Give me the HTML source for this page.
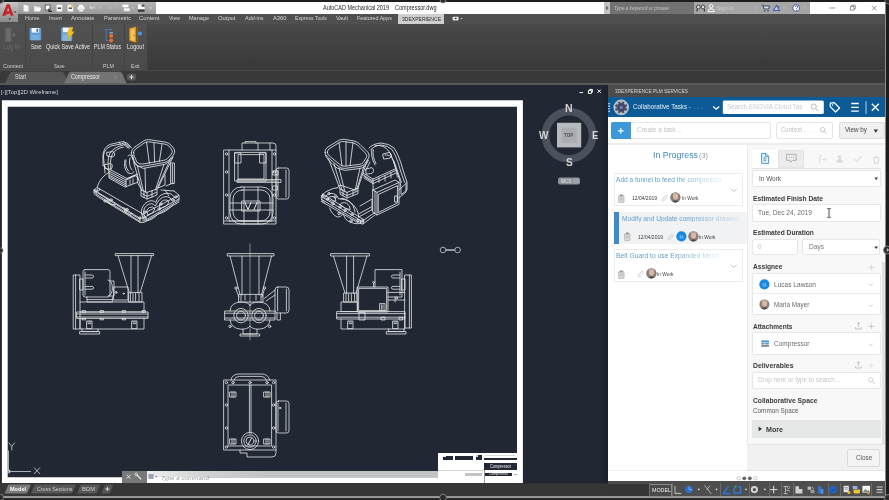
<!DOCTYPE html>
<html><head><meta charset="utf-8">
<style>
*{box-sizing:border-box;margin:0;padding:0}
html,body{width:889px;height:500px;overflow:hidden;background:#333;font-family:"Liberation Sans",sans-serif;}
#r{position:relative;width:889px;height:500px;overflow:hidden;background:#333;filter:blur(0.45px)}
.a{position:absolute}
.t{position:absolute;white-space:nowrap;line-height:1}
svg{position:absolute;overflow:visible}
.bx{position:absolute;background:#fff;border:1px solid #e7e7e7;border-radius:2px}
</style></head><body>
<div id="r">
<div class="a" style="left:0px;top:0px;width:889px;height:14px;background:#fff;"></div>
<div class="a" style="left:0px;top:0px;width:889px;height:1.5px;background:#1d1d1d;"></div>
<div class="a" style="left:18px;top:2px;width:138px;height:12px;background:linear-gradient(#b4b4b4,#999);"></div>
<div class="a" style="left:604px;top:2px;width:6px;height:12px;background:#c4c4c4;"></div>
<div class="a" style="left:610px;top:2px;width:84px;height:12px;background:#727272;"></div>
<div class="a" style="left:694px;top:2px;width:116px;height:12px;background:#a6a6a6;"></div>
<div class="t" style="left:322.5px;top:4.71px;font-size:6.6px;color:#2a2a2a;transform:scaleX(0.8328);transform-origin:0 0;">AutoCAD Mechanical 2019</div>
<div class="t" style="left:394.5px;top:4.71px;font-size:6.6px;color:#2a2a2a;transform:scaleX(0.8380);transform-origin:0 0;">Compressor.dwg</div>
<div class="t" style="left:614px;top:4.92px;font-size:6px;color:#c4c4c4;font-style:italic;transform:scaleX(0.7980);transform-origin:0 0;">Type a keyword or phrase</div>
<div class="t" style="left:717px;top:4.75px;font-size:6.2px;color:#d0d0d0;transform:scaleX(0.8548);transform-origin:0 0;">Sign In</div>
<div class="a" style="left:0px;top:14px;width:889px;height:10px;background:#4f4f4f;"></div>
<div class="a" style="left:398px;top:14px;width:45.5px;height:9.5px;background:#cfcfcf;"></div>
<div class="t" style="left:25px;top:16.21px;font-size:5.9px;color:#d6d6d6;transform:scaleX(0.9213);transform-origin:0 0;">Home</div>
<div class="t" style="left:48.5px;top:16.21px;font-size:5.9px;color:#d6d6d6;transform:scaleX(0.8810);transform-origin:0 0;">Insert</div>
<div class="t" style="left:71px;top:16.21px;font-size:5.9px;color:#d6d6d6;transform:scaleX(0.9949);transform-origin:0 0;">Annotate</div>
<div class="t" style="left:103.5px;top:16.21px;font-size:5.9px;color:#d6d6d6;transform:scaleX(0.9465);transform-origin:0 0;">Parametric</div>
<div class="t" style="left:139px;top:16.21px;font-size:5.9px;color:#d6d6d6;transform:scaleX(0.9920);transform-origin:0 0;">Content</div>
<div class="t" style="left:168.5px;top:16.21px;font-size:5.9px;color:#d6d6d6;transform:scaleX(0.8674);transform-origin:0 0;">View</div>
<div class="t" style="left:189px;top:16.21px;font-size:5.9px;color:#d6d6d6;transform:scaleX(0.9380);transform-origin:0 0;">Manage</div>
<div class="t" style="left:218px;top:16.21px;font-size:5.9px;color:#d6d6d6;transform:scaleX(0.9881);transform-origin:0 0;">Output</div>
<div class="t" style="left:245px;top:16.21px;font-size:5.9px;color:#d6d6d6;transform:scaleX(0.9247);transform-origin:0 0;">Add-ins</div>
<div class="t" style="left:272.5px;top:16.21px;font-size:5.9px;color:#d6d6d6;transform:scaleX(0.9797);transform-origin:0 0;">A360</div>
<div class="t" style="left:294.5px;top:16.21px;font-size:5.9px;color:#d6d6d6;transform:scaleX(0.8738);transform-origin:0 0;">Express Tools</div>
<div class="t" style="left:335.5px;top:16.21px;font-size:5.9px;color:#d6d6d6;transform:scaleX(0.9223);transform-origin:0 0;">Vault</div>
<div class="t" style="left:357px;top:16.21px;font-size:5.9px;color:#d6d6d6;transform:scaleX(0.9120);transform-origin:0 0;">Featured Apps</div>
<div class="t" style="left:401.5px;top:16.12px;font-size:6px;color:#2c2c2c;transform:scaleX(0.8414);transform-origin:0 0;">3DEXPERIENCE</div>
<div class="a" style="left:0px;top:24px;width:889px;height:47px;background:linear-gradient(#494949,#383838);"></div>
<div class="a" style="left:0px;top:24px;width:147px;height:45.5px;background:linear-gradient(#525252,#494949);"></div>
<div class="a" style="left:25.0px;top:24px;width:1px;height:46px;background:#434343;"></div>
<div class="a" style="left:91.5px;top:24px;width:1px;height:46px;background:#434343;"></div>
<div class="a" style="left:123.5px;top:24px;width:1px;height:46px;background:#434343;"></div>
<div class="a" style="left:146.5px;top:24px;width:1px;height:46px;background:#434343;"></div>
<div class="t" style="left:2.5px;top:44.17px;font-size:6.3px;color:#6d6d6d;transform:scaleX(0.9705);transform-origin:0 0;">Log In</div>
<div class="t" style="left:30.5px;top:44.17px;font-size:6.3px;color:#e8e8e8;transform:scaleX(0.7312);transform-origin:0 0;">Save</div>
<div class="t" style="left:45.5px;top:44.17px;font-size:6.3px;color:#e8e8e8;transform:scaleX(0.8666);transform-origin:0 0;">Quick Save Active</div>
<div class="t" style="left:94px;top:44.17px;font-size:6.3px;color:#e8e8e8;transform:scaleX(0.8291);transform-origin:0 0;">PLM Status</div>
<div class="t" style="left:127px;top:44.17px;font-size:6.3px;color:#e8e8e8;transform:scaleX(0.8822);transform-origin:0 0;">Logout</div>
<div class="t" style="left:3px;top:63.12px;font-size:6px;color:#cfcfcf;transform:scaleX(0.8949);transform-origin:0 0;">Connect</div>
<div class="t" style="left:53.5px;top:63.12px;font-size:6px;color:#cfcfcf;transform:scaleX(0.7678);transform-origin:0 0;">Save</div>
<div class="t" style="left:102.5px;top:63.12px;font-size:6px;color:#cfcfcf;transform:scaleX(0.8916);transform-origin:0 0;">PLM</div>
<div class="t" style="left:131px;top:63.12px;font-size:6px;color:#cfcfcf;transform:scaleX(0.8498);transform-origin:0 0;">Exit</div>
<div class="a" style="left:0px;top:1.5px;width:17.5px;height:20px;background:linear-gradient(#c6c6c6,#8a8a8a);"></div>
<svg style="left:1px;top:3px" width="16" height="16" viewBox="0 0 16 16"><path d="M1.2 12.8 L5.8 1.2 L8.6 1.2 L12.6 12.8 L9.6 12.8 L8.9 10.4 L5 11.6 L4.4 12.8 Z M5.9 8.6 L8.3 8 L7.1 4.2 Z" fill="#c5242c" fill-rule="evenodd"/><path d="M13 8.5h2.2l-1.1 1.4z" fill="#222"/><path d="M7.5 15.5h2.4l-1.2 1.6z" fill="#222"/></svg>
<div class="a" style="left:0px;top:70.2px;width:889px;height:1px;background:#4a4a4a;"></div>
<div class="a" style="left:0px;top:71.2px;width:889px;height:11.6px;background:#393939;"></div>
<div class="a" style="left:0px;top:82.6px;width:889px;height:2.2px;background:#595959;"></div>
<svg style="left:0;top:71px" width="160" height="13" viewBox="0 0 160 13"><path d="M5 12.5 L9.5 2.5 Q10.5 0.8 12.5 0.8 L61 0.8 Q63.5 0.8 64.5 3 L68 12.5 Z" fill="#565656"/><path d="M64 12.5 L68.5 2.5 Q69.5 0.8 71.5 0.8 L119 0.8 Q121.5 0.8 122.5 3 L126.5 12.5 Z" fill="#737373"/><path d="M127 4.5 Q127 2.5 129 2.5 L134 2.5 Q136 2.5 136 4.5 L136 7.5 Q136 9.5 134 9.5 L129 9.5 Q127 9.5 127 7.5Z" fill="#575757"/><path d="M129.3 6h4.4M131.5 3.8v4.4" stroke="#e0e0e0" stroke-width="1"/></svg>
<div class="t" style="left:14.5px;top:74.47px;font-size:6.3px;color:#dedede;transform:scaleX(0.8268);transform-origin:0 0;">Start</div>
<div class="t" style="left:71px;top:74.47px;font-size:6.3px;color:#ececec;transform:scaleX(0.8452);transform-origin:0 0;">Compressor</div>
<div class="t" style="left:113.5px;top:75.27px;font-size:5px;color:#999;transform:scaleX(1.2000);transform-origin:0 0;">x</div>
<svg style="left:18px;top:2px" width="138" height="12" viewBox="0 0 138 12"><path d="M5.600 3h3.400l1.600 1.600v4.800h-5z" fill="#f4f4f4"/><path d="M16 4h2.200l0.800 0.800h3.200v4.400H16z" fill="#e8e8e8"/><path d="M18 6h5l-1 3.200h-5z" fill="#fafafa"/><rect x="27.200" y="3" width="4.800" height="5" fill="#fff" stroke="#333" stroke-width="0.700"/><path d="M31 6.400v3h3" stroke="#222" stroke-width="1.100" fill="none"/><rect x="38.600" y="2.800" width="5.600" height="6.600" rx="0.500" fill="#fff"/><rect x="39.800" y="5.400" width="3.200" height="1.600" fill="#444"/><rect x="49.600" y="2.800" width="5.600" height="6.600" rx="0.500" fill="#f6f6f6"/><rect x="50.800" y="5.400" width="3.200" height="1.600" fill="#555"/><rect x="53" y="3" width="2.400" height="2.400" fill="#e9c46a"/><rect x="59.600" y="4.600" width="7" height="3.600" rx="0.800" fill="#f4f4f4"/><rect x="61" y="2.800" width="4.200" height="2" fill="#fff"/><rect x="61" y="7.400" width="4.200" height="2.400" fill="#fff" stroke="#999" stroke-width="0.400"/><path d="M72.600 6q2.600-2.400 5 0.400M72.400 4v2.400h2.400" stroke="#ddd" stroke-width="0.900" fill="none"/><path d="M81.600 5.400h2.200l-1.100 1.400z" fill="#d8d8d8"/><path d="M93 6q-2.600-2.400-5 0.400M93.200 4v2.400h-2.400" stroke="#b4b4b4" stroke-width="0.900" fill="none"/><path d="M98 5.400h2.200l-1.100 1.400z" fill="#c8c8c8"/><rect x="104.400" y="2.600" width="6" height="2.600" fill="#fff"/><rect x="105.800" y="6.200" width="6" height="3" fill="#f0f0f0"/><path d="M107 5.200v1" stroke="#fff" stroke-width="0.800"/><path d="M114 5.400h2.200l-1.100 1.400z" fill="#d8d8d8"/><rect x="120" y="2.400" width="6.600" height="4.600" fill="#fff"/><rect x="120" y="7.600" width="6.600" height="2.200" fill="#3c3c3c"/><rect x="123.600" y="2.400" width="3" height="2.400" fill="#555"/><path d="M131.600 5.400h2.400l-1.200 1.500z" fill="#ececec"/></svg>
<svg style="left:604px;top:2px" width="210" height="12" viewBox="0 0 210 12"><path d="M2 3.600l2.600 2.400-2.600 2.400z" fill="#666"/><circle cx="94.400" cy="5" r="1.900" stroke="#3a3a3a" stroke-width="0.900" fill="#ddd"/><circle cx="99" cy="5" r="1.900" stroke="#3a3a3a" stroke-width="0.900" fill="#ddd"/><path d="M93 7v2.600M100.400 7v2.600" stroke="#3a3a3a" stroke-width="1.200"/><circle cx="107.200" cy="4.200" r="1.700" stroke="#fff" stroke-width="0.900" fill="none"/><path d="M104 9.600q0.400-3 3.200-3t3.200 3z" stroke="#fff" stroke-width="0.900" fill="none"/><path d="M150.600 5.600h1.800l-0.900 1.200z" fill="#d8d8d8"/><path d="M157.600 3h1.400l1 4h4.600l0.800-3h-6" stroke="#2c3e6e" stroke-width="0.900" fill="#dde"/><circle cx="160.600" cy="9" r="0.800" fill="#2c3e6e"/><circle cx="164" cy="9" r="0.800" fill="#2c3e6e"/><path d="M172.400 3.400l-2.800 5h5.600zM172.400 3.400l3.200 2" stroke="#36489a" stroke-width="0.900" fill="#c9d0f0"/><circle cx="169.800" cy="8.400" r="1.100" fill="#5a6cc0"/><circle cx="175.200" cy="8.400" r="1.100" fill="#5a6cc0"/><path d="M179.400 5.600h1.600l-0.800 1.100z" fill="#ddd"/><circle cx="192.200" cy="6" r="3.400" fill="#fff" stroke="#3b4fa0" stroke-width="0.900"/><path d="M200.400 5.600h1.600l-0.800 1.100z" fill="#ddd"/></svg>
<svg style="left:794px;top:5px" width="5" height="7" viewBox="0 0 5 7"><path d="M1.2 1.900q0.200-1 1.300-1t1.200 1q0 0.700-0.700 1.100t-0.600 1.100" stroke="#2c3e90" stroke-width="0.800" fill="none"/><circle cx="2.400" cy="5.500" r="0.500" fill="#2c3e90"/></svg>
<svg style="left:810px;top:1.500px" width="75" height="12.500" viewBox="0 0 75 12.500"><g stroke="#777" stroke-width="0.800" fill="none"><path d="M19.600 6h5.400"/><path d="M40.400 4.400h3.600v3.800h-3.600zM41.600 4.400v-1.200h3.600v3.800h-1.200"/><path d="M62 3.800l4.600 4.600M66.600 3.800l-4.600 4.600"/></g></svg>
<svg style="left:450px;top:14px" width="20" height="10" viewBox="0 0 20 10"><rect x="2.600" y="2.800" width="6" height="3.600" rx="0.800" fill="#e8e8e8"/><circle cx="5.600" cy="4.600" r="1" fill="#555"/><path d="M10.600 4h2l-1 1.400z" fill="#ccc"/></svg>
<svg style="left:0;top:24px" width="150" height="24" viewBox="0 0 150 24"><rect x="5" y="3.600" width="6.400" height="14.400" rx="0.600" fill="#636363" stroke="#5c5c5c" stroke-width="0.600"/><rect x="6.600" y="5" width="3.800" height="12" fill="#6c6c6c"/><path d="M13 8.600l3 2.400-3 2.400z" fill="#6a6a6a"/><rect x="29.600" y="4" width="11.600" height="12.200" rx="0.800" fill="#5d9bd5"/><rect x="31.600" y="4" width="7.600" height="4.600" fill="#f4f7fb"/><rect x="36.400" y="4.800" width="1.800" height="3" fill="#3a6ea5"/><rect x="31" y="10.600" width="8.800" height="5.600" fill="#76aee0"/><rect x="61.200" y="3.600" width="11" height="13.400" rx="0.800" fill="#6aa3d8"/><rect x="63" y="3.600" width="6.600" height="4.600" fill="#f2f5fa"/><rect x="62.600" y="10.600" width="8" height="6.400" fill="#86b6e2"/><path d="M70 3.200l3.200 0.400-1.800 3.800 2.800 0.400-6.800 9.400 1.800-6-2.600-0.600z" fill="#f5c120" stroke="#e09a10" stroke-width="0.400"/><path d="M104.600 5.600h6.800M106.200 5.600v11h3" stroke="#4a7fb8" stroke-width="0.900" fill="none"/><path d="M110 4.400l2.200 1.200-2.200 1.200z" fill="#4a7fb8"/><circle cx="111.200" cy="12" r="2" fill="#ee6a2c"/><circle cx="111.200" cy="16.600" r="2" fill="#ee6a2c"/><rect x="109.400" y="8" width="3.600" height="1.600" fill="#7aa0c8"/><path d="M129.400 4.400l6.400-1.600v15.600l-6.400-1.800z" fill="#f0a020"/><path d="M130.800 5.400l4-1v12.800l-4-1z" fill="#f7c35a"/><path d="M129.400 16.600l6.400 1.800h1.400v-15.600" stroke="#b8740c" stroke-width="0.700" fill="none"/><circle cx="140" cy="9.400" r="2" fill="#4b97e6"/><circle cx="134" cy="11.400" r="0.600" fill="#8a5200"/></svg>
<div class="a" style="left:0px;top:85px;width:608px;height:398.2px;background:#212733;"></div>
<div class="a" style="left:601px;top:85px;width:7.5px;height:398px;background:linear-gradient(90deg,#212733,#1a1e28);"></div>
<div class="t" style="left:1px;top:89.05px;font-size:6.2px;color:#d8d8d8;transform:scaleX(0.9400);transform-origin:0 0;">[-][Top][2D Wireframe]</div>
<svg style="left:0;top:0" width="608" height="500" viewBox="0 0 608 500"><path d="M1.900 100.200H522.900V483.200H1.900Z M7.700 106.700V477.200H517V106.700Z" fill="#fff" fill-rule="evenodd"/></svg>
<svg style="left:0;top:0" width="608" height="500" viewBox="0 0 608 500"><g transform="translate(215,130) scale(0.2)" stroke="#e4e6e9" stroke-width="4.0" fill="none" stroke-linejoin="round" stroke-linecap="round">
<rect x="45" y="100" width="260" height="370"/><path d="M70 100V455H285V100M45 455H305"/>
<path d="M135 100V65H290Q305 65 305 80V100M215 65V100M275 65V100M150 65V58H205V65"/>
<rect x="100" y="112" width="155" height="143"/><path d="M115 125V245H245V125Z"/>
<rect x="100" y="115" width="30" height="50"/><rect x="225" y="115" width="30" height="50"/>
<path d="M112 248H330V262H112Z M112 255H300"/>
<rect x="305" y="190" width="65" height="155" rx="12"/><path d="M315 200V335M355 200V335M290 205H315V225H290ZM290 280H312V300H290Z"/>
<rect x="75" y="285" width="215" height="185" rx="55"/><rect x="90" y="300" width="185" height="155" rx="45"/>
<path d="M75 365H290M75 400H290M145 285V470M215 285V470"/>
<rect x="135" y="355" width="90" height="50"/><path d="M150 362L165 398L180 362M195 398L210 362" stroke-width="5"/>
<circle cx="58" cy="120" r="6"/><circle cx="58" cy="210" r="6"/><circle cx="58" cy="325" r="6"/><circle cx="58" cy="440" r="6"/><circle cx="297" cy="120" r="6"/><circle cx="297" cy="210" r="6"/><circle cx="297" cy="325" r="6"/><circle cx="297" cy="440" r="6"/></g></svg>
<svg style="left:0;top:0" width="608" height="500" viewBox="0 0 608 500"><g transform="translate(60,240) scale(0.2)" stroke="#e4e6e9" stroke-width="4.0" fill="none" stroke-linejoin="round" stroke-linecap="round">
<rect x="278" y="68" width="190" height="10"/><path d="M290 78L345 258M458 78L402 258M355 78V265M390 78V265"/>
<path d="M345 262H410V310H345ZM352 265V305M365 265V305M378 265V305M395 265V305"/>
<rect x="115" y="148" width="135" height="137" rx="10"/><path d="M125 160V275M125 175H160Q168 175 168 182T160 190H125M125 232H160Q168 232 168 239T160 246H125M240 200Q262 205 262 240T240 280"/>
<path d="M68 175H100V445H68ZM78 175V445M100 195H115V250H100Z"/>
<path d="M250 205H270V280H250M270 235H340V300H270Z"/><circle cx="318" cy="268" r="3"/><circle cx="280" cy="262" r="5"/>
<path d="M135 285V310H262V285M135 298H262"/>
<path d="M100 310H420V360H100M85 360H440V392H85ZM85 370H440M85 385H440"/>
<path d="M100 392V445H420V392"/>
<rect x="135" y="405" width="25" height="38"/><rect x="360" y="405" width="25" height="38"/><path d="M140 410H155M140 418H155M365 410H380M365 418H380"/>
<path d="M110 445V458H190V445M100 458H198V470H100Z"/>
<path d="M112 353H128V362H112ZM202 353H218V362H202ZM312 353H328V362H312ZM412 353H428V362H412ZM112 392H128V399H112ZM202 392H218V399H202ZM312 392H328V399H312Z"/>
</g></svg>
<svg style="left:0;top:0" width="608" height="500" viewBox="0 0 608 500"><g transform="translate(210,240) scale(0.2)" stroke="#e4e6e9" stroke-width="4.0" fill="none" stroke-linejoin="round" stroke-linecap="round">
<path d="M200 20V500" stroke-width="2.6"/>
<rect x="88" y="68" width="232" height="12"/><path d="M100 80L150 272M308 80L258 272M160 80V275M245 80V275"/>
<path d="M145 272H265V310H145ZM155 275V305M255 275V305M175 275V300M230 275V300"/>
<circle cx="130" cy="240" r="6"/><circle cx="272" cy="240" r="6"/><path d="M130 246L145 285M272 246L260 285"/>
<path d="M75 355H325V400H75ZM75 366H325M75 390H325"/>
<path d="M100 355Q102 312 155 310Q198 312 200 330Q202 312 245 310Q298 312 300 355"/>
<path d="M100 400Q104 442 155 446Q190 446 200 430Q210 446 245 446Q296 442 300 400"/>
<circle cx="155" cy="378" r="36"/><circle cx="245" cy="378" r="36"/><circle cx="155" cy="378" r="22"/><circle cx="245" cy="378" r="22"/>
<path d="M165 446V470H235V446M152 470H248V480H152Z"/>
<circle cx="100" cy="432" r="6"/><circle cx="298" cy="432" r="6"/>
<rect x="325" y="235" width="70" height="130" rx="14"/><path d="M338 245V355M382 245V355M325 250L272 292M325 275L280 305M335 365V400H352V365"/>
</g></svg>
<svg style="left:0;top:0" width="608" height="500" viewBox="0 0 608 500"><g transform="translate(325,240) scale(0.2)" stroke="#e4e6e9" stroke-width="4.0" fill="none" stroke-linejoin="round" stroke-linecap="round">
<rect x="30" y="68" width="192" height="12"/><path d="M42 80L100 265M210 80L155 265M108 80V268M143 80V268"/>
<path d="M95 265H160V310H95ZM105 268V305M118 268V305M132 268V305M148 268V305"/>
<path d="M82 310H163V358H82Z"/>
<rect x="163" y="235" width="152" height="125"/><rect x="170" y="242" width="138" height="111"/>
<rect x="275" y="318" width="25" height="34"/><path d="M282 324V346M290 324V346"/>
<path d="M250 235V148H385V285H315"/><path d="M375 160V275M375 175H340Q332 175 332 182T340 190H375M375 232H340Q332 232 332 239T340 246H375"/>
<circle cx="243" cy="212" r="5"/><path d="M243 217V235"/>
<path d="M400 175H432V440H400ZM422 175V440M385 195H400V250H385ZM315 262H400M315 300H400M350 285V310"/>
<circle cx="358" cy="290" r="5"/>
<path d="M60 358H400V395H60ZM60 368H400M60 386H400"/>
<path d="M80 395V445H400V395"/>
<rect x="115" y="405" width="25" height="38"/><rect x="340" y="405" width="25" height="38"/><path d="M120 410H135M120 418H135M345 410H360M345 418H360"/>
<path d="M318 445V458H395V445M308 458H405V470H308Z"/>
<path d="M172 362H200V400H172ZM282 386H300V400H282ZM372 386H388V400H372Z"/>
</g></svg>
<svg style="left:0;top:0" width="608" height="500" viewBox="0 0 608 500"><g transform="translate(210,365) scale(0.2)" stroke="#e4e6e9" stroke-width="4.0" fill="none" stroke-linejoin="round" stroke-linecap="round">
<rect x="70" y="75" width="260" height="350"/><rect x="92" y="100" width="216" height="305"/>
<path d="M105 75Q110 45 145 45H258Q292 45 298 75M120 75Q124 57 148 57H255Q278 57 282 75"/>
<path d="M197 100V340M205 100V340"/>
<rect x="100" y="135" width="30" height="25"/><rect x="270" y="135" width="30" height="25"/><rect x="100" y="370" width="30" height="25"/><rect x="270" y="370" width="30" height="25"/>
<path d="M110 135V160M120 135V160M280 135V160M290 135V160M110 370V395M120 370V395M280 370V395M290 370V395"/>
<circle cx="200" cy="380" r="43"/><circle cx="200" cy="380" r="31"/><circle cx="200" cy="380" r="20"/><path d="M192 395L208 365" stroke-width="5"/>
<rect x="330" y="180" width="65" height="160" rx="12"/><path d="M340 190V330M380 190V330"/><circle cx="350" cy="215" r="4"/>
<path d="M150 425V440H185V460H310Q330 460 330 440V425"/>
<circle cx="82" cy="88" r="6"/><circle cx="115" cy="88" r="6"/><circle cx="200" cy="88" r="6"/><circle cx="285" cy="88" r="6"/><circle cx="318" cy="88" r="6"/><circle cx="82" cy="200" r="6"/><circle cx="82" cy="315" r="6"/><circle cx="82" cy="410" r="6"/><circle cx="318" cy="200" r="6"/><circle cx="318" cy="315" r="6"/><circle cx="318" cy="410" r="6"/></g></svg>
<svg style="left:0;top:0" width="608" height="500" viewBox="0 0 608 500"><g transform="translate(85,130) scale(0.2)" stroke="#e4e6e9" stroke-width="4.2" fill="none" stroke-linejoin="round" stroke-linecap="round">
<path d="M232 112Q232 98 245 88L292 55Q302 48 318 48L400 60Q420 63 435 80L447 98Q452 112 442 125L420 150Q410 160 395 163L285 182Q262 185 250 170L236 135Q232 125 232 112Z"/>
<path d="M243 113Q243 103 253 95L296 65Q304 59 318 59L397 70Q414 73 425 86L435 101Q439 111 432 120L413 142Q405 150 392 152L288 170Q268 172 259 160L247 132Q243 122 243 113Z"/>
<path d="M238 125Q240 160 262 178L290 192L398 172Q420 165 440 135"/>
<path d="M243 160L283 300M262 180L292 305M300 192L303 312M395 172L352 300M425 150L360 292M440 135L365 290M308 62L322 168M385 72L372 158M345 66L348 162"/>
<path d="M280 300V330L310 345L360 325V295M280 300L310 312L360 295M310 312V345M285 318L310 332L358 312M295 306V338M335 304V336"/>
<path d="M90 178V125Q92 88 125 72L190 58Q215 60 232 88"/>
<path d="M100 215L92 130Q96 95 130 80L190 68Q210 70 222 92"/>
<path d="M120 205Q108 150 125 115Q145 85 190 76"/>
<path d="M130 200Q122 150 138 118Q155 92 192 86"/>
<path d="M110 112L140 108Q150 112 148 125Q145 135 135 135L112 130ZM100 172L130 168Q138 172 136 185Q134 195 125 196L102 192Z"/>
<path d="M192 58L225 85M188 68L215 90M170 60L178 72"/>
<path d="M92 178L120 205V240L200 285L262 262M120 205L205 250L255 228M205 250V285M120 215L205 260M120 225L205 270M120 232L203 278M130 200L210 243L250 225"/>
<path d="M200 150Q190 190 215 215Q235 225 245 210M215 130Q230 110 240 150M205 150Q198 185 218 205M225 140Q215 175 235 200"/>
<path d="M210 243L265 220M262 262V235M225 250L225 272M240 245V268"/>
<path d="M45 300L60 287Q78 232 120 212M45 300L270 438M45 300V318L62 332L275 462V438M52 308L272 445M58 322L272 455M62 288L290 420M48 310L60 322"/>
<path d="M290 420L470 326V352L295 455M290 440L470 345M275 462L295 462L470 360M290 420V455M445 305L470 326"/>
<path d="M290 440Q268 400 300 368Q330 342 355 362Q360 332 395 318Q432 310 447 335"/>
<path d="M300 435Q282 400 308 378Q335 358 352 380Q372 338 400 333Q427 333 435 352"/>
<path d="M315 425Q300 400 322 388Q340 378 350 395Q340 420 315 425ZM375 392Q365 365 392 352Q412 345 420 360Q410 385 375 392Z"/>
<path d="M305 455Q340 450 365 420Q400 415 440 375"/>
<path d="M110 340L112 362L135 375L150 372M195 388L198 408L222 422L235 418M120 345V365M205 392V412"/>
<path d="M430 165H447V268H430ZM437 170V262M405 280L440 265M400 300L420 330M380 300L445 305M365 290L400 275V225"/>
<path d="M262 262L283 300M255 228L270 250"/>
<circle cx="55" cy="305" r="6"/><circle cx="130" cy="350" r="6"/><circle cx="210" cy="398" r="6"/><circle cx="275" cy="440" r="6"/><circle cx="300" cy="440" r="6"/><circle cx="370" cy="395" r="6"/><circle cx="440" cy="350" r="6"/><circle cx="100" cy="355" r="6"/><circle cx="300" cy="410" r="6"/><circle cx="380" cy="370" r="6"/><circle cx="455" cy="335" r="6"/><circle cx="68" cy="298" r="6"/></g></svg>
<svg style="left:0;top:0" width="608" height="500" viewBox="0 0 608 500"><g transform="translate(315,130) scale(0.2)" stroke="#e4e6e9" stroke-width="4.2" fill="none" stroke-linejoin="round" stroke-linecap="round">
<path d="M50 112Q48 98 60 88L118 52Q130 45 148 47L195 55Q212 58 225 72L265 112Q275 125 268 140L250 168Q242 180 225 182L150 192Q128 194 115 180L62 135Q52 125 50 112Z"/>
<path d="M62 113Q60 103 70 95L122 62Q132 56 147 58L192 65Q206 68 217 80L254 117Q262 127 257 138L241 162Q235 171 222 172L151 181Q133 182 122 171L72 130Q63 122 62 113Z"/>
<path d="M52 125Q60 150 110 190L148 202L228 192Q250 188 268 150"/>
<path d="M68 145L125 295M95 170L135 300M120 190L150 310M225 190L200 305M262 150L215 290M245 180L208 300M120 62L135 180M190 62L175 178M155 58V180"/>
<path d="M125 295V320L160 340L215 318V290M125 295L160 312L215 290M160 312V340M130 312L160 328L212 306M140 300V330M190 300V328"/>
<path d="M270 90Q290 68 330 65Q372 68 395 90Q420 125 440 200L460 262V300L432 322"/>
<path d="M278 100Q295 78 330 75Q365 78 385 98Q408 130 428 205L448 262"/>
<path d="M300 78Q345 70 372 110Q400 160 412 235M285 95Q275 130 300 175M292 100Q284 130 305 168M350 125Q378 120 390 150L425 255Q432 290 430 320M395 155L432 262"/>
<path d="M340 120L372 112Q385 118 382 132Q378 142 368 142L345 145ZM255 195L285 188Q295 195 292 208Q288 218 278 218L258 220Z"/>
<path d="M240 215L290 245L400 195M245 240L290 268L405 215M290 245V300M255 200L275 160M242 225L290 255L402 203M245 232L290 262M350 230V255M380 215V240M320 240V262"/>
<path d="M290 300L310 312V425L290 412ZM310 312L420 262V372L310 425M318 322L412 278V365L318 412ZM300 306V418M290 300L400 250L420 262"/>
<rect x="400" y="330" width="12" height="30"/>
<path d="M420 300L460 262M420 340L455 310V270"/>
<path d="M34 329Q50 305 73 300Q95 288 112 289M34 329V352L48 364M129 345Q150 345 169 357Q195 372 208 396Q218 415 219 435"/>
<path d="M39 320L236 444M31 357L219 466M36 335L228 452M33 347L222 460M39 320L31 335M236 444L245 448L240 470L219 466M228 452V468"/>
<path d="M73 390Q85 425 112 435Q128 438 140 419Q150 450 169 458Q195 470 214 469"/>
<path d="M48 340Q62 312 92 318Q112 322 118 345Q140 335 165 352Q195 372 200 410"/>
<path d="M62 345Q72 328 92 332Q105 338 104 355Q85 362 62 345ZM125 372Q135 358 158 366Q178 378 176 398Q150 398 125 372Z"/>
<path d="M225 464L298 413M219 419L281 385M240 470L300 425M219 435L285 398M225 380L285 345V400M112 289L125 275L200 300"/>
<circle cx="40" cy="330" r="6"/><circle cx="62" cy="345" r="6"/><circle cx="125" cy="385" r="6"/><circle cx="185" cy="422" r="6"/><circle cx="215" cy="452" r="6"/><circle cx="235" cy="455" r="6"/><circle cx="70" cy="318" r="6"/><circle cx="100" cy="335" r="6"/><circle cx="150" cy="402" r="6"/><circle cx="90" cy="368" r="6"/><circle cx="120" cy="418" r="6"/><circle cx="180" cy="455" r="6"/></g></svg>
<svg style="left:0;top:430px" width="50" height="50" viewBox="0 0 50 50"><g stroke="#cfd2d6" stroke-width="0.8" fill="none"><path d="M8.5 20.5V41.5H31"/><rect x="7.2" y="40.2" width="2.6" height="2.6"/><path d="M8.8 12.5l3 4 3-4M11.8 16.5v4"/><path d="M34 37.5l6 6.5M40 37.5l-6 6.5"/></g></svg>
<svg style="left:438px;top:244px" width="26" height="12" viewBox="0 0 26 12"><g stroke="#c8cbd0" stroke-width="0.8" fill="none"><circle cx="5" cy="6" r="2.8"/><circle cx="19.6" cy="6" r="2.8"/><path d="M7.8 6h9" stroke-width="1.4"/></g></svg>
<svg style="left:525px;top:85px" width="85" height="110" viewBox="0 0 85 110"><circle cx="44" cy="50.2" r="23.6" stroke="#4b515c" stroke-width="7.6" fill="none"/><rect x="32" y="37.8" width="24.2" height="24.6" fill="#b7babf"/><rect x="36.5" y="42.5" width="15.2" height="15.2" fill="#a9acb1"/><g stroke="#fff" stroke-width="1" fill="none"><path d="M54.5 7.6h3.6"/><path d="M63.4 5.4h3v3h-3z M64.4 4.4h3v3"/><path d="M72.6 4.6l3.2 3.2M75.8 4.6l-3.2 3.2"/></g><rect x="33" y="92.4" width="22" height="7.2" rx="2" fill="#8d929a"/><rect x="48" y="93.4" width="6" height="5.2" rx="1" fill="#9ea3aa"/></svg>
<div class="t" style="left:564.3px;top:132.79px;font-size:5.8px;color:#4e5257;font-weight:bold;transform:scaleX(0.7784);transform-origin:0 0;">TOP</div>
<div class="t" style="left:565.2px;top:103.73px;font-size:10px;color:#d4d4d4;font-weight:bold;transform:scaleX(1.0524);transform-origin:0 0;">N</div>
<div class="t" style="left:538.8px;top:131.13px;font-size:10px;color:#d4d4d4;font-weight:bold;transform:scaleX(0.9959);transform-origin:0 0;">W</div>
<div class="t" style="left:592px;top:131.13px;font-size:10px;color:#d4d4d4;font-weight:bold;transform:scaleX(0.9595);transform-origin:0 0;">E</div>
<div class="t" style="left:565.6px;top:157.73px;font-size:10px;color:#d4d4d4;font-weight:bold;transform:scaleX(1.0194);transform-origin:0 0;">S</div>
<div class="t" style="left:560.5px;top:178.60px;font-size:5.2px;color:#e2e2e2;transform:scaleX(0.8655);transform-origin:0 0;">WCS</div>
<div class="a" style="left:438px;top:452.6px;width:80px;height:31px;background:#fff;"></div>
<div class="a" style="left:443px;top:455.7px;width:9.5px;height:4.5px;background:#212733;"></div>
<div class="a" style="left:455.3px;top:455.7px;width:17.7px;height:4.5px;background:#212733;"></div>
<div class="a" style="left:475.9px;top:455.3px;width:5.8px;height:4.9px;background:#212733;"></div>
<div class="a" style="left:484.2px;top:458.3px;width:33px;height:1.9px;background:#212733;"></div>
<div class="a" style="left:484.2px;top:463.2px;width:33px;height:6.5px;background:#212733;"></div>
<div class="a" style="left:484.5px;top:473.1px;width:27.5px;height:2.8px;background:#212733;"></div>
<div class="a" style="left:443px;top:455.7px;width:2.6px;height:1.6px;background:#e8e8e8;"></div>
<div class="a" style="left:475.9px;top:455.3px;width:2.2px;height:1.4px;background:#ddd;"></div>
<div class="a" style="left:438px;top:470.4px;width:46px;height:0.6px;background:#d8d8d8;"></div>
<div class="a" style="left:484px;top:470px;width:0.7px;height:13.2px;background:#9a9a9a;"></div>
<div class="a" style="left:464.9px;top:473.1px;width:16.8px;height:2.8px;background:#c4c4c4;"></div>
<div class="t" style="left:490px;top:464.37px;font-size:5px;color:#f0f0f0;transform:scaleX(0.7712);transform-origin:0 0;">Compressor</div>
<div class="t" style="left:489px;top:472.92px;font-size:3.4px;color:#e8e8e8;transform:scaleX(1.0261);transform-origin:0 0;">Compressor</div>
<div class="a" style="left:485px;top:454.6px;width:30px;height:0.7px;background:#d9d9d9;"></div>
<div class="a" style="left:514px;top:474px;width:3px;height:0.8px;background:#aaa;"></div>
<div class="a" style="left:146.6px;top:471.3px;width:291.4px;height:5.9px;background:linear-gradient(90deg,#eceeee 0,#d2d5d5 18%,#c0c4c5 40%);"></div>
<div class="a" style="left:146.6px;top:477.2px;width:60px;height:6px;background:#fff;"></div>
<div class="a" style="left:122.4px;top:471.3px;width:24.2px;height:11.9px;background:#777878;"></div>
<svg style="left:122.4px;top:471.3px" width="90" height="12" viewBox="0 0 90 12"><g stroke="#ececec" stroke-width="0.9" fill="none"><path d="M4.8 3.8l3.6 3.8M8.4 3.8l-3.6 3.8"/><path d="M14.6 3.6l4.6 4.8" stroke-width="1.3"/><circle cx="14.2" cy="3.4" r="1.3" stroke-width="0.8"/></g><rect x="26.4" y="3" width="5.2" height="5" fill="#9aa3b5"/><path d="M33.2 5h2l-1 1.4z" fill="#666"/></svg>
<div class="t" style="left:160.5px;top:474.52px;font-size:6px;color:#9a9c9e;font-style:italic;transform:scaleX(1.0455);transform-origin:0 0;">Type a command</div>
<div class="a" style="left:608px;top:85px;width:277px;height:396.3px;background:#fff;"></div>
<div class="a" style="left:608px;top:85px;width:277px;height:11.5px;background:#4c4c4c;"></div>
<div class="t" style="left:614.5px;top:88.12px;font-size:6px;color:#d6d6d6;transform:scaleX(0.7913);transform-origin:0 0;">3DEXPERIENCE PLM SERVICES</div>
<div class="a" style="left:608px;top:96.5px;width:277px;height:20.6px;background:#0c5b96;"></div>
<svg style="left:608px;top:96.5px" width="277" height="21" viewBox="0 0 277 21"><g fill="#cfe0ee"><rect x="0.3" y="6" width="1.6" height="1.3"/><rect x="0.3" y="8.6" width="1.6" height="1.3"/><rect x="0.3" y="11.2" width="1.6" height="1.3"/><rect x="0.3" y="13.8" width="1.6" height="1.3"/></g><circle cx="13.2" cy="10.4" r="7.8" fill="#b4c2ce"/><circle cx="13.2" cy="10.4" r="6.200" fill="#4a4f61"/><g stroke="#c4ced8" stroke-width="2" opacity="0.85"><path d="M13.2 3.400v2.400M13.2 15v2.400M6.200 10.400h2.400M17.800 10.400h2.400M8.300 5.500l1.700 1.700M16.400 13.600l1.700 1.700M8.300 15.300l1.700-1.700M16.400 7.200l1.700-1.700" /></g><circle cx="13.2" cy="10.400" r="3.400" fill="#3d4560"/><circle cx="13.2" cy="10.400" r="1.800" fill="#6a78b8"/><path d="M105.2 9.4l3 2.8 3-2.8" stroke="#fff" stroke-width="1.3" fill="none"/><rect x="114.8" y="3.6" width="101" height="13.4" rx="1.5" fill="#fff"/><circle cx="205.8" cy="9.6" r="2.6" stroke="#aaa" stroke-width="0.8" fill="none"/><path d="M207.7 11.6l2.6 2.7" stroke="#aaa" stroke-width="0.9"/><path d="M222.3 6.2 L226.2 5.6 L231.6 11 L227.6 15 L222.2 9.6 Z" stroke="#fff" stroke-width="1.2" fill="none" stroke-linejoin="round"/><circle cx="224.6" cy="8" r="0.7" fill="#fff"/><path d="M243.2 6.5h7.6M243.2 10.3h7.6M243.2 14.1h7.6" stroke="#fff" stroke-width="1.3"/><path d="M258 4.3v12.7" stroke="#c9d9e6" stroke-width="0.9"/><path d="M263.8 6.7l7 7M270.8 6.7l-7 7" stroke="#fff" stroke-width="1.3"/></svg>
<div class="t" style="left:633px;top:102.87px;font-size:7.6px;color:#e6eff6;transform:scaleX(0.8238);transform-origin:0 0;">Collaborative Tasks -</div>
<div class="t" style="left:694px;top:102.87px;font-size:7.6px;color:#7fa6c4;transform:scaleX(0.8525);transform-origin:0 0;">. . .</div>
<div class="t" style="left:727.3px;top:103.54px;font-size:6.8px;color:#c4cbd3;transform:scaleX(0.9348);transform-origin:0 0;">Search ENOVIA Cloud Tas</div>
<div class="a" style="left:611px;top:121.7px;width:159.5px;height:17.8px;background:#fff;border:1px solid #e6e6e6;border-radius:2px"></div>
<div class="a" style="left:611px;top:121.7px;width:19.5px;height:17.8px;background:#3d98d8;border-radius:2px 0 0 2px"></div>
<svg style="left:611px;top:121.7px" width="20" height="18" viewBox="0 0 20 18"><path d="M7 8.9h5.6M9.8 6.1v5.6" stroke="#fff" stroke-width="1.1"/></svg>
<div class="t" style="left:636.5px;top:127.24px;font-size:6.8px;color:#c2c2c2;transform:scaleX(0.9543);transform-origin:0 0;">Create a task...</div>
<div class="a" style="left:775.5px;top:121.7px;width:57.5px;height:17.8px;background:#fff;border:1px solid #e6e6e6;border-radius:2px"></div>
<div class="t" style="left:781px;top:127.41px;font-size:6.6px;color:#c0c0c0;transform:scaleX(0.9186);transform-origin:0 0;">Context . . .</div>
<svg style="left:818px;top:125px" width="12" height="12" viewBox="0 0 12 12"><circle cx="4.6" cy="4.6" r="2.2" stroke="#bbb" stroke-width="0.8" fill="none"/><path d="M6.2 6.3l2.3 2.4" stroke="#bbb" stroke-width="0.9"/></svg>
<div class="a" style="left:838.5px;top:121.7px;width:46px;height:17.8px;background:#f0f0f0;border:1px solid #dcdcdc;border-radius:2px"></div>
<div class="t" style="left:845px;top:127.24px;font-size:6.8px;color:#444;transform:scaleX(0.9287);transform-origin:0 0;">View by</div>
<svg style="left:873px;top:129px" width="6" height="5" viewBox="0 0 6 5"><path d="M0.6 0.6h4.4l-2.2 3.2z" fill="#333"/></svg>
<div class="a" style="left:608px;top:143.2px;width:277px;height:1.6px;background:#ededed;"></div>
<div class="t" style="left:652.6px;top:150.27px;font-size:9.6px;color:#3f8cc2;transform:scaleX(0.9167);transform-origin:0 0;">In Progress</div>
<div class="t" style="left:699px;top:153.01px;font-size:6.6px;color:#9a9a9a;transform:scaleX(1.1157);transform-origin:0 0;">(3)</div>
<div class="a" style="left:613.5px;top:173px;width:129.3px;height:33px;background:#fff;border:1px solid #ececec"></div>
<div class="t" style="left:616px;top:176.34px;font-size:7.4px;color:#62a0cd;transform:scaleX(0.8885);transform-origin:0 0;-webkit-mask-image:linear-gradient(90deg,#000 55%,rgba(0,0,0,0.12) 100%);">Add a funnel to feed the compressor</div>
<svg style="left:618px;top:193.8px" width="7" height="9" viewBox="0 0 7 9"><rect x="0.6" y="1.6" width="5.4" height="6.8" rx="0.6" fill="#dcdcdc" stroke="#aaa" stroke-width="0.7"/><rect x="2" y="0.4" width="2.6" height="2" fill="#999"/><path d="M1.8 4.2h3M1.8 5.8h3" stroke="#999" stroke-width="0.5"/></svg>
<div class="t" style="left:632px;top:196.16px;font-size:5.6px;color:#3c3c3c;transform:scaleX(0.8920);transform-origin:0 0;">12/04/2019</div>
<svg style="left:661px;top:194.3px" width="7" height="8" viewBox="0 0 7 8"><path d="M1.2 5.6 L4.3 1.6 Q5.3 0.6 6 1.5 Q6.6 2.3 5.8 3.2 L3 6.7 Q2.2 7.5 1.5 6.9 Q0.8 6.2 1.6 5.3 L3.8 2.7" stroke="#c6c6c6" stroke-width="0.7" fill="none"/></svg>
<svg style="left:670.4px;top:192.3px" width="11" height="11" viewBox="0 0 11 11"><defs><clipPath id="c173"><circle cx="5.4" cy="5.4" r="5"/></clipPath></defs><circle cx="5.4" cy="5.4" r="5" fill="#8d8178"/><g clip-path="url(#c173)"><rect x="0" y="0" width="11" height="11" fill="#8b7f77"/><ellipse cx="5.6" cy="4.6" rx="2.6" ry="3.1" fill="#d9b9a6"/><path d="M0 11 Q5.5 5.5 11 11Z" fill="#4d4a4b"/><path d="M2.6 3.6 Q5.5 -0.5 8.6 3.4 L8.4 1.2 L3 1Z" fill="#b9aca2"/></g></svg>
<div class="t" style="left:681.9px;top:196.16px;font-size:5.6px;color:#3c3c3c;transform:scaleX(0.8598);transform-origin:0 0;">In Work</div>
<svg style="left:729.5px;top:187.5px" width="8" height="5" viewBox="0 0 8 5"><path d="M0.8 1l3 2.4 3-2.4" stroke="#b5b5b5" stroke-width="0.8" fill="none"/></svg>
<div class="a" style="left:613.8px;top:211.5px;width:133.5px;height:32px;background:#f0f2f4;"></div>
<div class="a" style="left:613.8px;top:211.5px;width:5px;height:32px;background:#3a8bcb;"></div>
<div class="t" style="left:621.6px;top:214.84px;font-size:7.4px;color:#62a0cd;transform:scaleX(0.8945);transform-origin:0 0;-webkit-mask-image:linear-gradient(90deg,#000 55%,rgba(0,0,0,0.12) 100%);">Modify and Update compressor drawing</div>
<svg style="left:623.6px;top:232.3px" width="7" height="9" viewBox="0 0 7 9"><rect x="0.6" y="1.6" width="5.4" height="6.8" rx="0.6" fill="#dcdcdc" stroke="#aaa" stroke-width="0.7"/><rect x="2" y="0.4" width="2.6" height="2" fill="#999"/><path d="M1.8 4.2h3M1.8 5.8h3" stroke="#999" stroke-width="0.5"/></svg>
<div class="t" style="left:637.6px;top:234.66px;font-size:5.6px;color:#3c3c3c;transform:scaleX(0.8920);transform-origin:0 0;">12/04/2019</div>
<svg style="left:666.6px;top:232.8px" width="7" height="8" viewBox="0 0 7 8"><path d="M1.2 5.6 L4.3 1.6 Q5.3 0.6 6 1.5 Q6.6 2.3 5.8 3.2 L3 6.7 Q2.2 7.5 1.5 6.9 Q0.8 6.2 1.6 5.3 L3.8 2.7" stroke="#c6c6c6" stroke-width="0.7" fill="none"/></svg>
<svg style="left:676.0px;top:230.8px" width="11" height="11" viewBox="0 0 11 11"><circle cx="5.4" cy="5.4" r="5.1" fill="#1787e0"/><path d="M4.2 3.8v3.2h1.2M6.3 3.8v3.2h1.2" stroke="#cfe6fa" stroke-width="0.6" fill="none"/></svg>
<svg style="left:687.5px;top:230.8px" width="11" height="11" viewBox="0 0 11 11"><defs><clipPath id="c211.5"><circle cx="5.4" cy="5.4" r="5"/></clipPath></defs><circle cx="5.4" cy="5.4" r="5" fill="#8d8178"/><g clip-path="url(#c211.5)"><rect x="0" y="0" width="11" height="11" fill="#8b7f77"/><ellipse cx="5.6" cy="4.6" rx="2.6" ry="3.1" fill="#d9b9a6"/><path d="M0 11 Q5.5 5.5 11 11Z" fill="#4d4a4b"/><path d="M2.6 3.6 Q5.5 -0.5 8.6 3.4 L8.4 1.2 L3 1Z" fill="#b9aca2"/></g></svg>
<div class="t" style="left:699.0px;top:234.66px;font-size:5.6px;color:#3c3c3c;transform:scaleX(0.8598);transform-origin:0 0;">In Work</div>
<div class="a" style="left:613.5px;top:249px;width:129.3px;height:33px;background:#fff;border:1px solid #ececec"></div>
<div class="t" style="left:616px;top:252.34px;font-size:7.4px;color:#62a0cd;transform:scaleX(0.9105);transform-origin:0 0;-webkit-mask-image:linear-gradient(90deg,#000 55%,rgba(0,0,0,0.12) 100%);">Belt Guard to use Expanded Metal</div>
<svg style="left:618px;top:269.8px" width="7" height="9" viewBox="0 0 7 9"><rect x="0.6" y="1.6" width="5.4" height="6.8" rx="0.6" fill="#dcdcdc" stroke="#aaa" stroke-width="0.7"/><rect x="2" y="0.4" width="2.6" height="2" fill="#999"/><path d="M1.8 4.2h3M1.8 5.8h3" stroke="#999" stroke-width="0.5"/></svg>
<svg style="left:636.5px;top:270.3px" width="7" height="8" viewBox="0 0 7 8"><path d="M1.2 5.6 L4.3 1.6 Q5.3 0.6 6 1.5 Q6.6 2.3 5.8 3.2 L3 6.7 Q2.2 7.5 1.5 6.9 Q0.8 6.2 1.6 5.3 L3.8 2.7" stroke="#c6c6c6" stroke-width="0.7" fill="none"/></svg>
<svg style="left:645.9px;top:268.3px" width="11" height="11" viewBox="0 0 11 11"><defs><clipPath id="c249"><circle cx="5.4" cy="5.4" r="5"/></clipPath></defs><circle cx="5.4" cy="5.4" r="5" fill="#8d8178"/><g clip-path="url(#c249)"><rect x="0" y="0" width="11" height="11" fill="#8b7f77"/><ellipse cx="5.6" cy="4.6" rx="2.6" ry="3.1" fill="#d9b9a6"/><path d="M0 11 Q5.5 5.5 11 11Z" fill="#4d4a4b"/><path d="M2.6 3.6 Q5.5 -0.5 8.6 3.4 L8.4 1.2 L3 1Z" fill="#b9aca2"/></g></svg>
<div class="t" style="left:657.4px;top:272.16px;font-size:5.6px;color:#3c3c3c;transform:scaleX(0.8598);transform-origin:0 0;">In Work</div>
<svg style="left:729.5px;top:263.5px" width="8" height="5" viewBox="0 0 8 5"><path d="M0.8 1l3 2.4 3-2.4" stroke="#b5b5b5" stroke-width="0.8" fill="none"/></svg>
<div class="a" style="left:747px;top:144.8px;width:138px;height:299.5px;background:#f8f8f8;"></div>
<div class="a" style="left:747px;top:144.8px;width:1px;height:326px;background:#e9e9e9;"></div>
<div class="a" style="left:752px;top:167.5px;width:129px;height:0.8px;background:#e2e2e2;"></div>
<div class="a" style="left:752px;top:150.4px;width:26px;height:17.4px;background:#fff;"></div>
<div class="a" style="left:778px;top:150.4px;width:26.3px;height:17.2px;background:#ececec;border:0.6px solid #e4e4e4"></div>
<svg style="left:747px;top:145px" width="138" height="24" viewBox="0 0 138 24"><path d="M14.6 8.4h4.2l2.8 2.8v7.2h-7z M18.6 8.4v3h3" stroke="#3f8fc6" stroke-width="0.9" fill="#e8f2fa" stroke-linejoin="round"/><path d="M16 13h3.6M16 15.2h3.6M17.8 12v4.6" stroke="#3f8fc6" stroke-width="0.6"/><path d="M39.6 9.3h9.6v6h-3.6l-1.6 1.8-1.2-1.8h-3.2z" stroke="#9d9d9d" stroke-width="0.8" fill="none" stroke-linejoin="round"/><path d="M42 12.3h0.9M44 12.3h0.9M46 12.3h0.9" stroke="#9d9d9d" stroke-width="0.8"/><path d="M72.6 10.6v8M72.6 10.8h2.4M74.6 14.4h4.6M77.6 12.8l1.8 1.6-1.8 1.6" stroke="#d9d9d9" stroke-width="0.8" fill="none"/><circle cx="92.6" cy="12" r="1.7" fill="#d9d9d9"/><path d="M89.2 17.6q0.4-3.6 3.4-3.6t3.4 3.6z" fill="#d9d9d9"/><path d="M95 17l1.6 1" stroke="#d9d9d9" stroke-width="0.8"/><path d="M107.6 14.2l2.3 2.6 4.4-5.4" stroke="#cfcfcf" stroke-width="0.9" fill="none"/><path d="M126.4 12.4h6M127.2 12.6l0.5 6h3.4l0.5-6M128.2 11.4h2.4" stroke="#d6d6d6" stroke-width="0.9" fill="none"/></svg>
<div class="bx" style="left:752px;top:169.8px;width:128.5px;height:17.6px"></div>
<div class="t" style="left:759px;top:175.61px;font-size:6.6px;color:#555;transform:scaleX(0.9727);transform-origin:0 0;">In Work</div>
<svg style="left:874px;top:177px" width="5" height="4" viewBox="0 0 5 4"><path d="M0.4 0.5h3.6l-1.8 2.6z" fill="#333"/></svg>
<div class="t" style="left:752.6px;top:194.74px;font-size:7.4px;color:#3a3a3a;font-weight:bold;transform:scaleX(0.9055);transform-origin:0 0;">Estimated Finish Date</div>
<div class="bx" style="left:752px;top:204.2px;width:128.5px;height:17.4px"></div>
<div class="t" style="left:757.6px;top:209.61px;font-size:6.6px;color:#6a6a6a;transform:scaleX(0.9989);transform-origin:0 0;">Tue, Dec 24, 2019</div>
<svg style="left:826px;top:207.5px" width="6" height="10" viewBox="0 0 6 10"><path d="M1.2 0.6h1.4l0.4 0.4 0.4-0.4h1.4M3 1v8M1.2 9.4h1.4l0.4-0.4 0.4 0.4h1.4" stroke="#222" stroke-width="0.8" fill="none"/></svg>
<div class="t" style="left:752.6px;top:228.94px;font-size:7.4px;color:#3a3a3a;font-weight:bold;transform:scaleX(0.8991);transform-origin:0 0;">Estimated Duration</div>
<div class="bx" style="left:752px;top:238.5px;width:45.5px;height:16.9px"></div>
<div class="t" style="left:758px;top:243.91px;font-size:6.6px;color:#c4c4c4;transform:scaleX(0.9535);transform-origin:0 0;">0</div>
<div class="bx" style="left:802.3px;top:238.5px;width:78.2px;height:16.9px"></div>
<div class="t" style="left:809px;top:243.91px;font-size:6.6px;color:#777;transform:scaleX(0.9975);transform-origin:0 0;">Days</div>
<svg style="left:874px;top:245.5px" width="5" height="4" viewBox="0 0 5 4"><path d="M0.4 0.5h3.6l-1.8 2.6z" fill="#333"/></svg>
<div class="t" style="left:752.6px;top:262.94px;font-size:7.4px;color:#3a3a3a;font-weight:bold;transform:scaleX(0.8966);transform-origin:0 0;">Assignee</div>
<svg style="left:867.5px;top:263.5px" width="7" height="7" viewBox="0 0 7 7"><path d="M0.6 3.4h5.6M3.4 0.6v5.6" stroke="#ccc" stroke-width="0.7"/></svg>
<div class="bx" style="left:752px;top:272.6px;width:128.5px;height:42.8px"></div>
<div class="a" style="left:753px;top:293.2px;width:126.5px;height:0.8px;background:#ececec;"></div>
<svg style="left:759px;top:278.5px" width="11" height="11" viewBox="0 0 11 11"><circle cx="5.4" cy="5.4" r="5.1" fill="#1787e0"/><path d="M4.2 3.8v3.2h1.2M6.3 3.8v3.2h1.2" stroke="#cfe6fa" stroke-width="0.6" fill="none"/></svg>
<div class="t" style="left:773.5px;top:280.67px;font-size:7px;color:#6a6a6a;transform:scaleX(0.9385);transform-origin:0 0;">Lucas Lawson</div>
<svg style="left:868px;top:283px" width="6" height="4" viewBox="0 0 6 4"><path d="M0.8 0.8l2 1.6 2-1.6" stroke="#bdbdbd" stroke-width="0.7" fill="none"/></svg>
<svg style="left:759px;top:299px" width="11" height="11" viewBox="0 0 11 11"><defs><clipPath id="cmm"><circle cx="5.4" cy="5.4" r="5"/></clipPath></defs><g clip-path="url(#cmm)"><rect x="0" y="0" width="11" height="11" fill="#8b7f77"/><ellipse cx="5.6" cy="4.6" rx="2.6" ry="3.1" fill="#d9b9a6"/><path d="M0 11 Q5.5 5.5 11 11Z" fill="#4d4a4b"/><path d="M2.6 3.6 Q5.5 -0.5 8.6 3.4 L8.4 1.2 L3 1Z" fill="#b9aca2"/></g></svg>
<div class="t" style="left:773.5px;top:301.07px;font-size:7px;color:#6a6a6a;transform:scaleX(0.9126);transform-origin:0 0;">Maria Mayer</div>
<svg style="left:868px;top:303.5px" width="6" height="4" viewBox="0 0 6 4"><path d="M0.8 0.8l2 1.6 2-1.6" stroke="#bdbdbd" stroke-width="0.7" fill="none"/></svg>
<div class="t" style="left:752.6px;top:322.54px;font-size:7.4px;color:#3a3a3a;font-weight:bold;transform:scaleX(0.8813);transform-origin:0 0;">Attachments</div>
<svg style="left:854.5px;top:322.2px" width="7" height="8" viewBox="0 0 7 8"><path d="M3.4 5.2v-4.4M1.8 2.2l1.6-1.6 1.6 1.6M0.6 5v2h5.6v-2" stroke="#b0b0b0" stroke-width="0.7" fill="none"/></svg>
<svg style="left:867.5px;top:323px" width="7" height="7" viewBox="0 0 7 7"><path d="M0.6 3.4h5.6M3.4 0.6v5.6" stroke="#bbb" stroke-width="0.7"/></svg>
<div class="bx" style="left:752px;top:332px;width:128.5px;height:22.5px"></div>
<svg style="left:760.5px;top:339.5px" width="9" height="8" viewBox="0 0 9 8"><rect x="0.3" y="0.4" width="7.6" height="2" fill="#4a9bd0"/><rect x="0.3" y="2.9" width="3.2" height="1.6" fill="#7b8a95"/><rect x="4.2" y="2.9" width="3.7" height="1.6" fill="#4a9bd0"/><rect x="0.3" y="5" width="7.6" height="1.8" fill="#7b8a95"/></svg>
<div class="t" style="left:773.5px;top:340.37px;font-size:7px;color:#6a6a6a;transform:scaleX(0.9312);transform-origin:0 0;">Compressor</div>
<svg style="left:868px;top:342.5px" width="6" height="4" viewBox="0 0 6 4"><path d="M0.8 0.8l2 1.6 2-1.6" stroke="#bdbdbd" stroke-width="0.7" fill="none"/></svg>
<div class="t" style="left:752.6px;top:361.54px;font-size:7.4px;color:#3a3a3a;font-weight:bold;transform:scaleX(0.9288);transform-origin:0 0;">Deliverables</div>
<svg style="left:854.5px;top:361.2px" width="7" height="8" viewBox="0 0 7 8"><path d="M3.4 5.2v-4.4M1.8 2.2l1.6-1.6 1.6 1.6M0.6 5v2h5.6v-2" stroke="#b0b0b0" stroke-width="0.7" fill="none"/></svg>
<svg style="left:867.5px;top:362px" width="7" height="7" viewBox="0 0 7 7"><path d="M0.6 3.4h5.6M3.4 0.6v5.6" stroke="#dedede" stroke-width="0.7"/></svg>
<div class="bx" style="left:752px;top:372px;width:128.5px;height:17.4px"></div>
<div class="t" style="left:758px;top:377.24px;font-size:6.8px;color:#c6c6c6;transform:scaleX(0.9271);transform-origin:0 0;">Drop here or type to search...</div>
<svg style="left:866.5px;top:376px" width="10" height="10" viewBox="0 0 10 10"><circle cx="3.8" cy="3.8" r="2.2" stroke="#c4c4c4" stroke-width="0.8" fill="none"/><path d="M5.4 5.5l2.3 2.4" stroke="#c4c4c4" stroke-width="0.9"/></svg>
<div class="t" style="left:752.6px;top:396.74px;font-size:7.4px;color:#3a3a3a;font-weight:bold;transform:scaleX(0.9118);transform-origin:0 0;">Collaborative Space</div>
<div class="t" style="left:752.6px;top:406.87px;font-size:7px;color:#5a5a5a;transform:scaleX(0.9065);transform-origin:0 0;">Common Space</div>
<div class="a" style="left:752px;top:420.2px;width:128.5px;height:18.2px;background:#e5e6e6;"></div>
<svg style="left:757.5px;top:426.3px" width="5" height="6" viewBox="0 0 5 6"><path d="M0.6 0.5v4.8l3.4-2.4z" fill="#333"/></svg>
<div class="t" style="left:766px;top:425.54px;font-size:7.4px;color:#3a3a3a;font-weight:bold;transform:scaleX(0.9615);transform-origin:0 0;">More</div>
<div class="a" style="left:747px;top:444.3px;width:138px;height:26.8px;background:#f1f1f1;border-top:1px solid #e6e6e6;border-bottom:1px solid #e4e4e4"></div>
<div class="a" style="left:847.3px;top:449.3px;width:33.2px;height:17.3px;background:#f4f4f4;border:1px solid #dadada;border-radius:2px"></div>
<div class="t" style="left:855.5px;top:455.04px;font-size:6.8px;color:#5a5a5a;transform:scaleX(0.9318);transform-origin:0 0;">Close</div>
<div class="a" style="left:609px;top:470.4px;width:138px;height:0.8px;background:#efefef;"></div>
<div class="a" style="left:881.5px;top:262px;width:3.2px;height:182px;background:#e2e2e2;"></div>
<svg style="left:735px;top:474px" width="26" height="8" viewBox="0 0 26 8"><circle cx="3.7" cy="4.3" r="1.7" fill="#fff" stroke="#aaa" stroke-width="0.6"/><circle cx="9.3" cy="4.3" r="1.9" fill="#666"/><circle cx="14.8" cy="4.3" r="1.9" fill="#666"/><circle cx="20.4" cy="4.3" r="1.7" fill="#fff" stroke="#aaa" stroke-width="0.6"/></svg>
<div class="a" style="left:0px;top:483.2px;width:608px;height:17px;background:#363636;"></div>
<div class="a" style="left:523px;top:483px;width:85px;height:0.6px;background:#2a2f3a;"></div>
<div class="a" style="left:608px;top:480.8px;width:277.3px;height:2.8px;background:#4b4b4b;"></div>
<div class="a" style="left:608px;top:483.5px;width:277.3px;height:13px;background:#353535;"></div>
<div class="a" style="left:0px;top:496.4px;width:889px;height:2px;background:linear-gradient(#8c8c8c,#a4a4a4);"></div>
<div class="a" style="left:0px;top:498.4px;width:889px;height:1.6px;background:#262626;"></div>
<svg style="left:0;top:483.800px" width="130" height="12" viewBox="0 0 130 12"><path d="M4.5 9.4 L8 1.6 Q8.6 0.6 10 0.6 L29.5 0.6 Q31 0.6 30.4 2 L27.6 8.2 Q27 9.4 25.6 9.4 Z" fill="#7a7a7a"/><path d="M31 9.4 L34.4 1.6 Q35 0.6 36.4 0.6 L74.5 0.6 Q76 0.6 75.4 2 L72.6 8.2 Q72 9.4 70.6 9.4 Z" fill="#575757"/><path d="M77 9.4 L80.4 1.6 Q81 0.6 82.4 0.6 L99 0.6 Q100.5 0.6 99.9 2 L97.1 8.2 Q96.5 9.4 95.1 9.4 Z" fill="#575757"/><path d="M101.5 9.4 L104.6 1.8 Q105.2 0.8 106.4 0.8 L112 0.8 Q113.4 0.8 112.9 2 L110.4 8.2 Q109.8 9.4 108.6 9.4 Z" fill="#555"/><path d="M105.4 5h4M107.4 3v4" stroke="#e4e4e4" stroke-width="0.9"/></svg>
<div class="t" style="left:10px;top:485.92px;font-size:6px;color:#fff;font-weight:bold;transform:scaleX(0.9231);transform-origin:0 0;">Model</div>
<div class="t" style="left:36.5px;top:485.92px;font-size:6px;color:#cfcfcf;transform:scaleX(0.8798);transform-origin:0 0;">Cross Sections</div>
<div class="t" style="left:82px;top:485.92px;font-size:6px;color:#cfcfcf;transform:scaleX(0.9750);transform-origin:0 0;">BDM</div>
<div class="a" style="left:649px;top:481.2px;width:236.3px;height:15.3px;background:#4e4e4e;"></div>
<div class="a" style="left:649px;top:484px;width:22.8px;height:12.6px;background:#4a4a4a;border:0.8px solid #8a8a8a"></div>
<div class="a" style="left:649.1px;top:483px;width:0.9px;height:13px;background:#6a6a6a;"></div>
<div class="a" style="left:671.6px;top:483px;width:0.9px;height:13px;background:#6a6a6a;"></div>
<div class="a" style="left:720.1px;top:483px;width:0.9px;height:13px;background:#6a6a6a;"></div>
<div class="a" style="left:748.6px;top:483px;width:0.9px;height:13px;background:#6a6a6a;"></div>
<div class="a" style="left:768.6px;top:483px;width:0.9px;height:13px;background:#6a6a6a;"></div>
<div class="a" style="left:780.6px;top:483px;width:0.9px;height:13px;background:#6a6a6a;"></div>
<div class="a" style="left:792.6px;top:483px;width:0.9px;height:13px;background:#6a6a6a;"></div>
<div class="a" style="left:828.1px;top:483px;width:0.9px;height:13px;background:#6a6a6a;"></div>
<div class="a" style="left:840.1px;top:483px;width:0.9px;height:13px;background:#6a6a6a;"></div>
<div class="a" style="left:871.2px;top:483px;width:0.9px;height:13px;background:#6a6a6a;"></div>
<div class="t" style="left:651.5px;top:487.32px;font-size:6px;color:#ececec;transform:scaleX(0.8905);transform-origin:0 0;">MODEL</div>
<svg style="left:648px;top:482px" width="236" height="15" viewBox="0 0 236 15"><path d="M27 4v7.6h6.4" stroke="#c9c9c9" stroke-width="0.9" fill="none"/><path d="M29 11.6v-1.4M31 11.6v-1.4" stroke="#aaa" stroke-width="0.6"/><circle cx="41" cy="7.6" r="3.6" fill="#2b6fd0"/><path d="M41 7.6V4.4M41 7.6h3.2" stroke="#8fc0ff" stroke-width="0.8"/><path d="M49.6 6.8h2.4l-1.2 1.6z" fill="#eee"/><path d="M56.6 3.4l6.6 8.4M62 3.6l-3.4 4.4" stroke="#bdbdbd" stroke-width="0.9"/><path d="M67.4 6.8h2.4l-1.2 1.6z" fill="#eee"/><path d="M75 11.4l5.4-6.6M75 11.4h7.2" stroke="#2e74d6" stroke-width="1.5" fill="none"/><path d="M86 5.4v5.6h6.6V4.8h-2.4" stroke="#2e74d6" stroke-width="1.6" fill="none"/><circle cx="87.6" cy="4.6" r="1.2" fill="#3fa55a"/><path d="M96.8 6.8h2.4l-1.2 1.6z" fill="#eee"/><circle cx="106.4" cy="7.6" r="2.6" stroke="#d6d6d6" stroke-width="1.9" fill="none"/><path d="M115.6 6.8h2.4l-1.2 1.6z" fill="#eee"/><path d="M122 7.6h7.4M125.7 3.9v7.4" stroke="#e2e2e2" stroke-width="1"/><path d="M135.4 4.4h4.2M137.4 4.4v7.2M137.4 7.6l4.6 1.6M135.6 11.6h4" stroke="#bdbdbd" stroke-width="0.9" fill="none"/><circle cx="140.6" cy="5.4" r="1.2" stroke="#bdbdbd" stroke-width="0.7" fill="none"/><path d="M147.4 4.2h3.6v7.4h-3.6zM151 7h3.4v4.6H151z" fill="#d0d0d0"/><rect x="159.6" y="4.6" width="3.6" height="3.2" fill="#bbb"/><rect x="162.6" y="7.8" width="3.8" height="3.4" fill="#9c9c9c"/><path d="M164 5.2l2 1.6" stroke="#ddd" stroke-width="0.6"/><path d="M170 4.4q2.6-1.6 3.4 1v5.800h-3.400z" fill="#2e74d6"/><path d="M172.4 7h3v4.800h-3z" fill="#4a8be6"/><circle cx="184.8" cy="7.800" r="3.800" fill="#1f62c8"/><path d="M183 8l1.400 1.400 2.400-3" stroke="#0e3f8e" stroke-width="0.8" fill="none"/><rect x="195.600" y="3.800" width="5.200" height="6.400" fill="#e8e8e8"/><path d="M196.600 5.600h3.200M196.600 7.200h3.200" stroke="#666" stroke-width="0.600"/><circle cx="201" cy="10.400" r="1.500" fill="#e8b730"/><rect x="204.600" y="4" width="4.800" height="3" fill="#8fb2e8"/><rect x="205.600" y="7.400" width="6.400" height="4" rx="0.800" fill="#ebc33a"/><rect x="214.400" y="3.800" width="7.600" height="6.800" fill="#f2f2f2"/><path d="M214.800 10.200l2.600-3.400 2 2.200 1.200-1.200 1.400 2.400z" fill="#888"/><path d="M220.400 9.400l1.600 2.800h-3.200z" fill="#e8822a"/><path d="M228.600 5h6M228.600 7.600h6M228.600 10.200h6" stroke="#cfcfcf" stroke-width="1.100"/></svg>
<div class="a" style="left:885.3px;top:1.5px;width:1px;height:498.5px;background:#8c8c8c;"></div>
<div class="a" style="left:886.3px;top:0px;width:2.7px;height:500px;background:#1c1c1c;"></div>
<svg style="left:0;top:0" width="889" height="500" viewBox="0 0 889 500"><g stroke="#8a8a8a" stroke-width="0.9" fill="#2a2a2a"><circle cx="443" cy="497.600" r="3.400"/><circle cx="887.500" cy="250" r="4"/><circle cx="0.500" cy="250.500" r="2.500"/><circle cx="0.500" cy="497.500" r="3"/><circle cx="888" cy="498" r="3.500"/><circle cx="443" cy="0" r="3"/><circle cx="0" cy="0" r="3.500"/><circle cx="888.500" cy="0.500" r="3.500"/></g><path d="M886.800 248l2.400 2-2.400 2z" fill="#bbb"/></svg>
</div>
</body></html>
